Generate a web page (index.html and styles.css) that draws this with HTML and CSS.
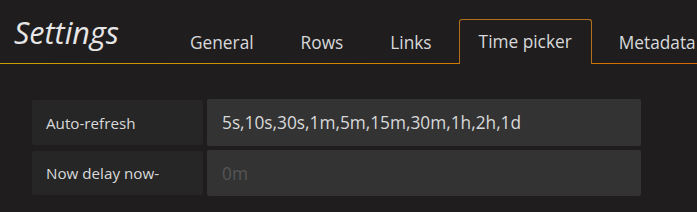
FILE: index.html
```html
<!DOCTYPE html>
<html>
<head>
<meta charset="utf-8">
<link rel="stylesheet" href="styles.css">
</head>
<body>
<div class="page-header">
  <h1 class="title">Settings</h1>
  <nav class="tabs">
    <a class="tab">General</a>
    <a class="tab">Rows</a>
    <a class="tab">Links</a>
    <a class="tab active">Time picker</a>
    <a class="tab">Metadata</a>
  </nav>
</div>
<div class="content">
  <div class="form-row">
    <div class="label">Auto-refresh</div>
    <div class="input">5s,10s,30s,1m,5m,15m,30m,1h,2h,1d</div>
  </div>
  <div class="form-row">
    <div class="label">Now delay now-</div>
    <div class="input placeholder">0m</div>
  </div>
</div>
</body>
</html>
```
FILE: styles.css
```css
html, body {
  margin: 0;
  padding: 0;
  background: #1f1d1e;
  font-family: "Open Sans", "DejaVu Sans", sans-serif;
  color: #d8d9da;
  overflow: hidden;
}
.page-header {
  height: 63px;
  display: flex;
  align-items: flex-end;
  position: relative;
  white-space: nowrap;
}
.page-header::after {
  content: "";
  position: absolute;
  left: 0;
  right: 0;
  bottom: -1px;
  height: 1px;
  background: linear-gradient(to right, #c9a000, #d66a00);
}
.title {
  flex-shrink: 0;
  margin: 0 0 0 14px;
  align-self: flex-start;
  margin-top: 12px;
  font-size: 30.5px;
  font-weight: 400;
  font-style: italic;
  color: #e6e6e6;
  line-height: 40px;
  width: 156px;
}
.tabs {
  flex-shrink: 0;
  display: flex;
  gap: 7px;
  position: relative;
  z-index: 1;
}
.tab {
  flex-shrink: 0;
  display: block;
  font-size: 17.3px;
  line-height: 22px;
  padding: 12px 19px 10px;
  border: 1px solid transparent;
  border-bottom: none;
  border-radius: 3px 3px 0 0;
  color: #d8d9da;
  height: 22px;
  margin-bottom: -1px;
}
.tab.active {
  border-color: #b5701e;
  background: #1f1d1e;
  padding-top: 11px;
  height: 23px;
  padding-bottom: 10px;
}
.content {
  padding: 36px 0 0 32px;
  display: flex;
  flex-direction: column;
  gap: 4px;
}
.form-row {
  display: flex;
  gap: 4px;
}
.label {
  flex-shrink: 0;
  width: 157px;
  padding-left: 14px;
  background: #262626;
  border-radius: 2px;
  font-size: 15.2px;
  display: flex;
  align-items: center;
  margin: 1px 0;
  color: #d8d9da;
}
.input {
  flex-shrink: 0;
  width: 419px;
  height: 47px;
  padding-left: 15px;
  background: #333333;
  border-radius: 2px;
  font-size: 17.3px;
  display: flex;
  align-items: center;
  color: #d8d9da;
}
.input.placeholder {
  color: #555555;
  height: 46px;
}
```
